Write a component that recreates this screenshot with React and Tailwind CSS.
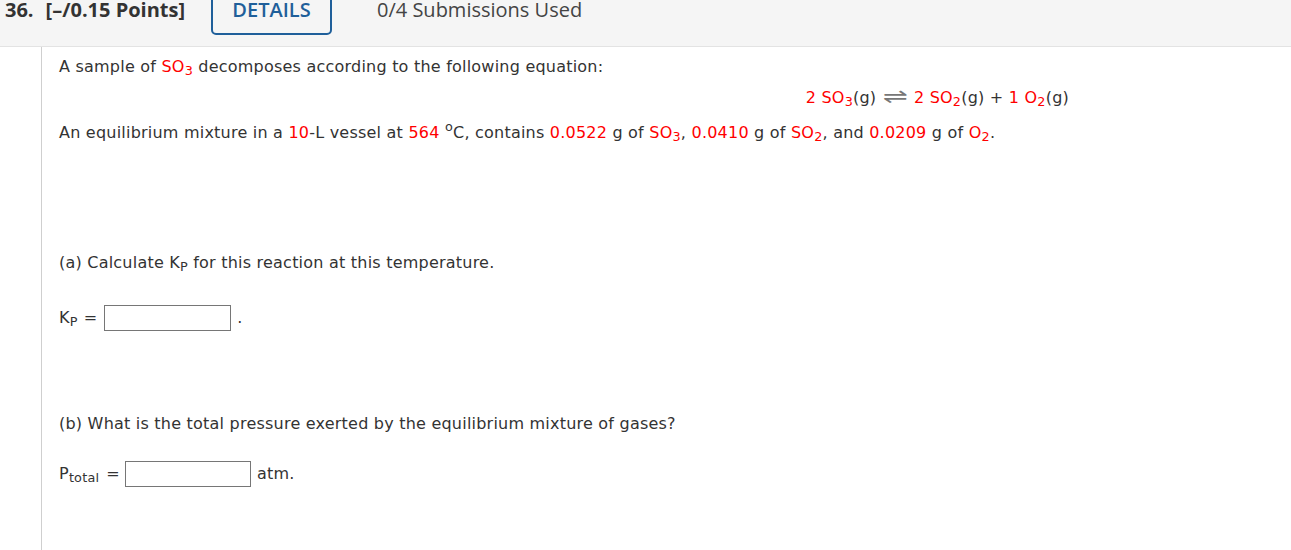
const red = "text-[#ff0000]";

function R({ children }) {
  return <span className={red}>{children}</span>;
}

function Sub({ children }) {
  return <sub className="text-[0.8em] relative top-[0.2em] align-baseline">{children}</sub>;
}

export default function App() {
  return (
    <div className="w-[1291px] h-[550px] bg-white overflow-hidden text-[#333]">
      {/* header bar */}
      <div className="h-[47px] bg-[#f5f5f5] border-b border-[#e3e3e3] flex items-start [font-family:'Open_Sans',sans-serif]">
        <div className="w-[211px] pl-[5px] flex gap-[12px] text-[20px] font-bold leading-[22px] mt-[-1px]">
          <span>36.</span>
          <span>[–/0.15 Points]</span>
        </div>
        <div className="mt-[-6px] w-[121px] h-[41px] border-2 border-[#1f5f9a] rounded-b-[5px] flex items-end justify-center pb-[12px] text-[20px] leading-[22px] text-[#1f5f9a] font-semibold">
          DETAILS
        </div>
        <div className="ml-[45px] mt-[-1px] text-[20px] leading-[22px] text-[#444]">0/4 Submissions Used</div>
      </div>

      {/* body */}
      <div className="flex h-[503px]">
        <div className="w-[42px] border-r border-[#cfcfcf] h-full"></div>
        <div className="pl-[17px] w-[1027px] [font-family:'DejaVu_Sans',sans-serif] text-[16px] tracking-[0.22px] leading-[20px]">
          <p className="mt-[10px]">
            A sample of <R>SO<Sub>3</Sub></R> decomposes according to the following equation:
          </p>
          <p className="mt-[9px] text-right">
            <R>2 SO<Sub>3</Sub></R>(g){" "}
            <span className="inline-block mx-[5px] scale-x-150 text-[#777] text-[20px] leading-[20px]">⇌</span>{" "}
            <R>2 SO<Sub>2</Sub></R>(g) + <R>1 O<Sub>2</Sub></R>(g)
          </p>
          <p className="mt-[15px]">
            An equilibrium mixture in a <R>10</R>-L vessel at <R>564</R>{" "}
            <sup className="text-[0.8em] relative top-[-0.55em] align-baseline">o</sup>C, contains{" "}
            <R>0.0522</R> g of <R>SO<Sub>3</Sub></R>, <R>0.0410</R> g of <R>SO<Sub>2</Sub></R>, and <R>0.0209</R> g of{" "}
            <R>O<Sub>2</Sub></R>.
          </p>

          <p className="mt-[110px]">
            (a) Calculate K<Sub>P</Sub> for this reaction at this temperature.
          </p>
          <div className="mt-[32px] flex items-center">
            <span>
              K<Sub>P</Sub>
            </span>
            <span className="ml-[6px]">=</span>
            <input
              type="text"
              className="ml-[7px] w-[127px] h-[26px] border border-[#767676] bg-white outline-none"
            />
            <span className="ml-[6px]">.</span>
          </div>

          <p className="mt-[83px]">(b) What is the total pressure exerted by the equilibrium mixture of gases?</p>
          <div className="mt-[27px] flex items-center">
            <span>
              P<Sub>total</Sub>
            </span>
            <span className="ml-[7px]">=</span>
            <input
              type="text"
              className="ml-[5px] w-[126px] h-[26px] border border-[#767676] bg-white outline-none"
            />
            <span className="ml-[6px]">atm.</span>
          </div>
        </div>
      </div>
    </div>
  );
}
